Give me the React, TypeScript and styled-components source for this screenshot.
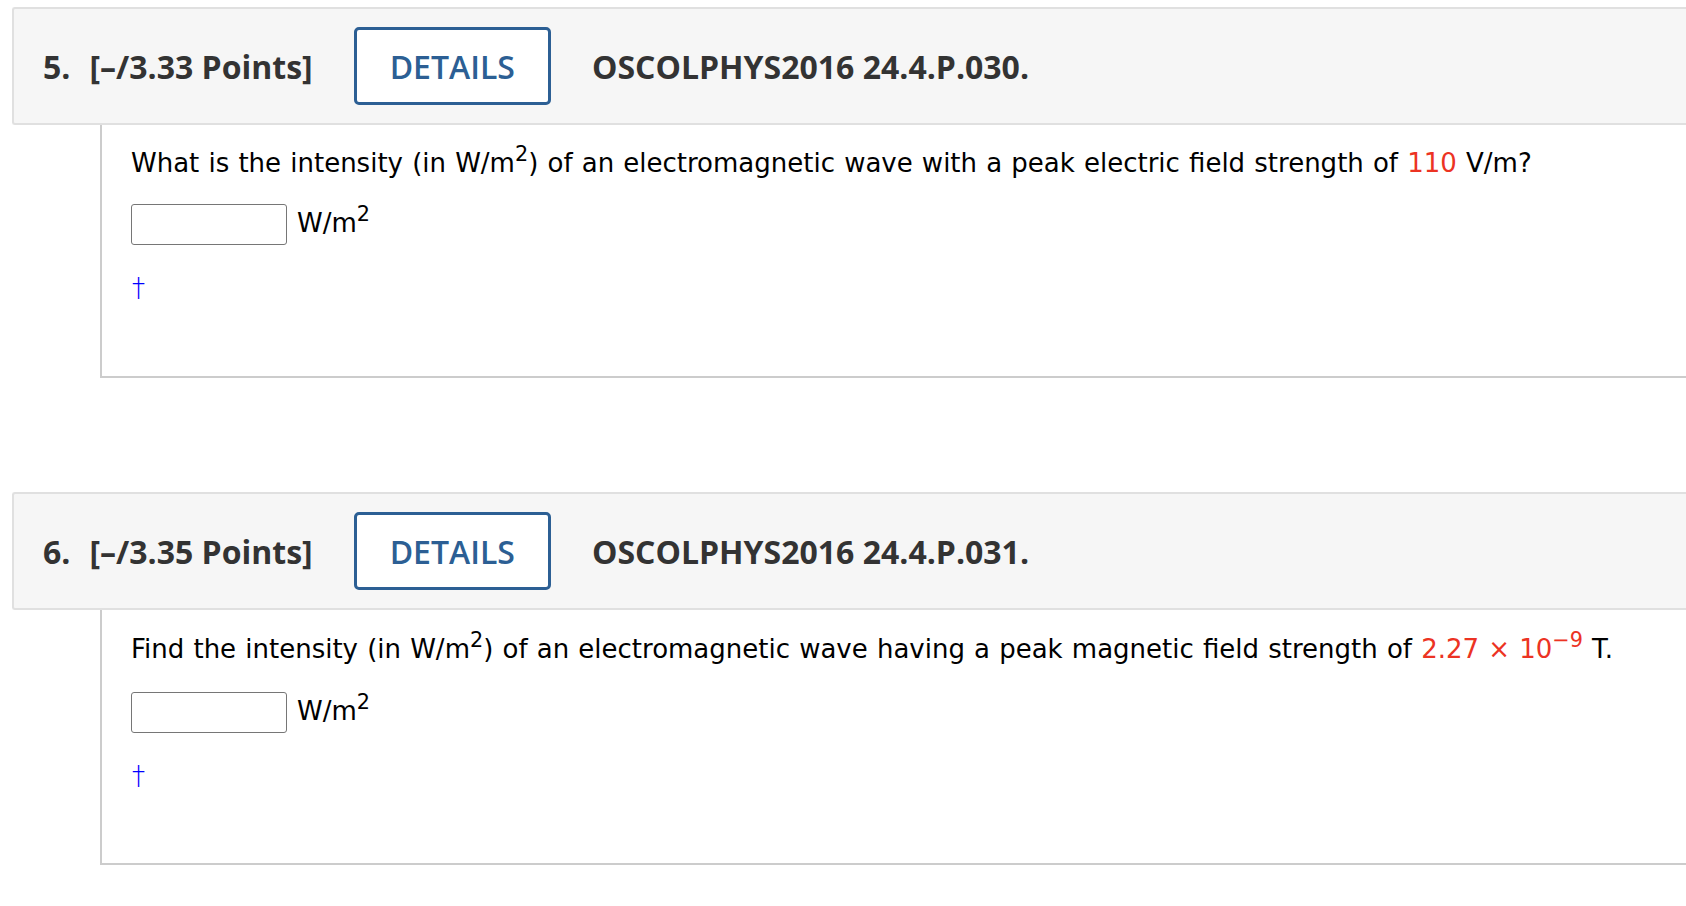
import * as React from 'react';
import styled, { createGlobalStyle } from 'styled-components';

const GlobalStyle = createGlobalStyle`
  html, body {
    margin: 0;
    padding: 0;
    background: #ffffff;
  }
  body {
    font-family: "DejaVu Sans", Verdana, sans-serif;
    overflow: hidden;
  }
`;

const Page = styled.div`
  padding: 7px 0 0 12px;
  display: flex;
  flex-direction: column;
  gap: 114px;
`;

const Question = styled.section`
  display: flex;
  flex-direction: column;
`;

const Header = styled.div`
  display: flex;
  align-items: center;
  height: 114px;
  padding-left: 29px;
  background: #f6f6f6;
  border: 2px solid #e0e0e0;
  border-right: none;
  border-radius: 3px 0 0 3px;
  font-family: "Open Sans", "Liberation Sans", sans-serif;
  color: #333333;
  font-size: 32px;
  font-weight: 700;
`;

const Number = styled.span`
  margin-right: 19px;
`;

const Points = styled.span`
  margin-right: 41px;
`;

const DetailsButton = styled.button`
  height: 78px;
  padding: 0 33px;
  background: #ffffff;
  border: 3px solid #2c5f94;
  border-radius: 5px;
  color: #2c5f94;
  font-family: "Open Sans", "Liberation Sans", sans-serif;
  font-size: 32px;
  font-weight: 600;
  cursor: pointer;
  margin-right: 41px;
`;

const Code = styled.span``;

const Body = styled.div<{ $tall?: boolean }>`
  box-sizing: border-box;
  margin-left: 88px;
  border-left: 2px solid #cccccc;
  border-bottom: 2px solid #cccccc;
  padding: ${(p) => (p.$tall ? 23 : 22)}px 0 0 29px;
  height: ${(p) => (p.$tall ? 255 : 253)}px;
  color: #000000;
  font-size: 26px;
  word-spacing: 0.9px;
`;

const Prompt = styled.p<{ $tall?: boolean }>`
  margin: 0 0 ${(p) => (p.$tall ? 27 : 25)}px 0;
  line-height: 32px;
  white-space: nowrap;
`;

const Sup = styled.sup`
  font-size: 0.8em;
  line-height: 0;
  vertical-align: 0.55em;
`;

const Given = styled.span`
  color: #ec3323;
`;

const AnswerRow = styled.div`
  display: flex;
  align-items: flex-start;
  height: 41px;
  gap: 10px;
`;

const AnswerInput = styled.input`
  width: 156px;
  height: 41px;
  box-sizing: border-box;
  border: 1.5px solid #767676;
  border-radius: 3px;
  background: #ffffff;
  outline: none;
`;

const Unit = styled.span`
  line-height: 41px;
  margin-top: -1px;
`;

const Dagger = styled.div`
  margin: 31px 0 0 1px;
  color: #0000ff;
  font-size: 26px;
  font-weight: 300;
  line-height: 24px;
`;

interface IQuestionProps {
  num: number;
  points: string;
  code: string;
  tall?: boolean;
  children: React.ReactNode;
}

function QuestionBlock(props: IQuestionProps) {
  const { num, points, code, tall, children } = props;
  return (
    <Question>
      <Header>
        <Number>{num}.</Number>
        <Points>[–/{points} Points]</Points>
        <DetailsButton type="button">DETAILS</DetailsButton>
        <Code>{code}</Code>
      </Header>
      <Body $tall={tall}>
        <Prompt $tall={tall}>{children}</Prompt>
        <AnswerRow>
          <AnswerInput type="text" />
          <Unit>
            W/m<Sup>2</Sup>
          </Unit>
        </AnswerRow>
        <Dagger>†</Dagger>
      </Body>
    </Question>
  );
}

export default function App() {
  return (
    <>
      <GlobalStyle />
      <Page>
        <QuestionBlock num={5} points="3.33" code="OSCOLPHYS2016 24.4.P.030.">
          What is the intensity (in W/m<Sup>2</Sup>) of an electromagnetic wave
          with a peak electric field strength of <Given>110</Given> V/m?
        </QuestionBlock>
        <QuestionBlock
          num={6}
          points="3.35"
          code="OSCOLPHYS2016 24.4.P.031."
          tall
        >
          Find the intensity (in W/m<Sup>2</Sup>) of an electromagnetic wave
          having a peak magnetic field strength of{' '}
          <Given>
            2.27 × 10<Sup>−9</Sup>
          </Given>{' '}
          T.
        </QuestionBlock>
      </Page>
    </>
  );
}
